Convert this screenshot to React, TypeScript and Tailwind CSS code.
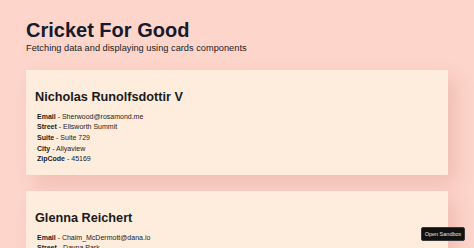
const users = [
  {
    name: "Nicholas Runolfsdottir V",
    email: "Sherwood@rosamond.me",
    street: "Ellsworth Summit",
    suite: "Suite 729",
    city: "Aliyaview",
    zipcode: "45169",
  },
  {
    name: "Glenna Reichert",
    email: "Chaim_McDermott@dana.io",
    street: "Dayna Park",
    suite: "Suite 449",
    city: "Bartholomebury",
    zipcode: "76495-3109",
  },
];

function Card({ user }: { user: (typeof users)[number] }) {
  const rows = [
    ["Email", user.email],
    ["Street", user.street],
    ["Suite", user.suite],
    ["City", user.city],
    ["ZipCode", user.zipcode],
  ];
  return (
    <div className="bg-[#feeddc] px-[9px] pt-[19px] pb-[10px] shadow-[8px_8px_18px_rgba(170,70,50,0.16)]">
      <h2 className="text-[12.7px] font-bold text-[#1a1a1a] leading-[16px] mb-[6.5px]">{user.name}</h2>
      <div className="pl-[2px]">
        {rows.map(([k, v]) => (
          <p key={k} className="text-[7px] leading-[10.7px] text-[#222]">
            <span className="font-bold">{k}</span> - {v}
          </p>
        ))}
      </div>
    </div>
  );
}

export default function App() {
  return (
    <div
      className="bg-[#fdd5cb] px-[26px] pt-[18px] overflow-hidden h-[248px] relative"
      style={{ fontFamily: '"Liberation Sans", Arial, sans-serif' }}
    >
      <h1 className="text-[20px] font-bold text-[#151a2d] leading-[24px]">Cricket For Good</h1>
      <p className="text-[9.25px] text-[#222] leading-[12px]">
        Fetching data and displaying using cards components
      </p>
      <div className="mt-[16px] flex flex-col gap-[16px]">
        {users.map((u) => (
          <Card key={u.name} user={u} />
        ))}
      </div>
      <button className="absolute left-[421px] top-[227px] w-[44px] h-[14px] flex items-center justify-center bg-[#111] text-[#e5e5e5] text-[5.5px] rounded-[2px] border border-[#3a3a3a]">
        Open Sandbox
      </button>
    </div>
  );
}
